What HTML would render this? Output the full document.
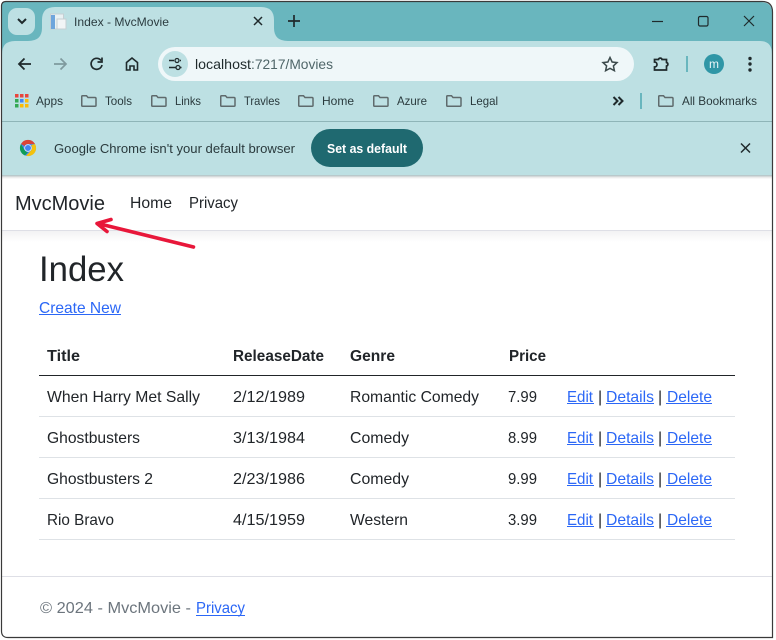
<!DOCTYPE html>
<html><head><meta charset="utf-8"><title>Index - MvcMovie</title>
<style>
html,body{margin:0;padding:0;background:#fff;width:776px;height:640px;overflow:hidden}
svg{display:block}
text{font-family:"Liberation Sans",sans-serif;font-size:16px;fill:#212529}
.l{fill:#2b67f6}
.b{font-size:12px;fill:#2a3a3d}
.t{font-size:16px;fill:#212529}
.h{font-weight:bold}
.ic{fill:none;stroke:#1f2a2c;stroke-width:1.6}
.fd{fill:none;stroke:#5f6a6c;stroke-width:1.5}
</style></head><body>
<svg width="776" height="640" viewBox="0 0 776 640" xmlns="http://www.w3.org/2000/svg">
<rect width="776" height="640" fill="#fff"/>
<!-- tab strip -->
<path d="M2 2H760Q772 2 772 12V60H2Z" fill="#69b6be"/>
<!-- toolbar + bookmarks + infobar -->
<path d="M2 54Q2 41 15 41H760Q772 41 772 54V176H2Z" fill="#bde0e3"/>
<!-- tab -->
<path d="M28 41Q42 41 42 28V20Q42 7 55 7H261Q274 7 274 20V28Q274 41 288 41Z" fill="#bde0e3"/>
<rect x="8" y="8" width="27" height="27" rx="9" fill="#bde0e3"/>
<path d="M18 19l4 4 4-4" fill="none" stroke="#1f2a2c" stroke-width="2"/>
<rect x="50.500" y="14" width="13" height="15" fill="#e9f1f3" stroke="#c5cfd3"/>
<rect x="51" y="15" width="4" height="14" fill="#6ea5dc"/>
<rect x="57" y="19" width="9" height="10" fill="#f2f5f6" stroke="#c5cfd3"/>
<text x="74" y="26" style="font-size:12px;fill:#2c3c40" textLength="95" lengthAdjust="spacingAndGlyphs">Index - MvcMovie</text>
<path d="M254 17l8 8M262 17l-8 8" fill="none" stroke="#1f2a2c" stroke-width="1.500"/>
<path d="M294 15v12M288 21h12" fill="none" stroke="#1f2a2c" stroke-width="1.700"/>
<!-- window controls -->
<path d="M652 21.500h11" stroke="#1f2a2c" stroke-width="1.200" fill="none"/>
<rect x="698.500" y="16.500" width="9.500" height="9.500" rx="1.500" fill="none" stroke="#1f2a2c" stroke-width="1.200"/>
<path d="M744 16l10 10M754 16l-10 10" stroke="#1f2a2c" stroke-width="1.200" fill="none"/>
<!-- nav -->
<path d="M31 64H19M24.500 58.500L19 64l5.500 5.500" class="ic" style="stroke-width:1.800"/>
<path d="M54 64H66M60.500 58.500L66 64l-5.500 5.500" fill="none" stroke="#7f9a9e" stroke-width="1.700"/>
<path d="M101 60.500A5.500 5.500 0 1 0 102 65M102 57.500v4.500h-4.500" class="ic" style="stroke-width:1.700"/>
<path d="M126.500 62.500L132 58l5.500 4.500V70H134v-4h-4v4h-3.500Z" class="ic"/>
<!-- address -->
<rect x="158" y="47" width="476" height="34" rx="17" fill="#eff7f9"/>
<circle cx="175" cy="64" r="13" fill="#bde0e3"/>
<path d="M169 60.500h5M180 60.500h1M169 67.500h7M180.500 67.500h1" stroke="#1f2a2c" stroke-width="1.400" fill="none"/>
<circle cx="177" cy="60.500" r="2" fill="none" stroke="#1f2a2c" stroke-width="1.300"/>
<circle cx="178" cy="67.500" r="2" fill="none" stroke="#1f2a2c" stroke-width="1.300"/>
<text x="195" y="69" style="font-size:14px;fill:#1f2a2c" textLength="56" lengthAdjust="spacingAndGlyphs">localhost</text>
<text x="251" y="69" style="font-size:14px;fill:#4f6669" textLength="82" lengthAdjust="spacingAndGlyphs">:7217/Movies</text>
<path d="M610 57.500l2.100 4.500 4.900.6-3.600 3.300 1 4.800-4.400-2.400-4.400 2.400 1-4.800-3.600-3.300 4.900-.6Z" fill="none" stroke="#3c4a4c" stroke-width="1.500"/>
<path d="M654.500 59.500H658.500A1.800 1.800 0 0 1 662 59.500H666.500V62.500A1.800 1.800 0 0 1 666.500 66V70H654.500V67A2.500 2.500 0 0 0 654.500 62Z" class="ic" style="stroke-width:1.700"/>
<rect x="686" y="56" width="2" height="16" fill="#69b6be"/>
<circle cx="714" cy="64" r="10" fill="#2f96a6"/>
<text x="714" y="68" text-anchor="middle" style="font-size:12px;fill:#e8f6f8">m</text>
<circle cx="750" cy="58.500" r="1.700" fill="#1f2a2c"/><circle cx="750" cy="64" r="1.700" fill="#1f2a2c"/><circle cx="750" cy="70" r="1.700" fill="#1f2a2c"/>
<!-- bookmarks -->
<g>
<rect x="15" y="94" width="3.500" height="3.500" fill="#e8453c"/><rect x="20" y="94" width="3.500" height="3.500" fill="#e8453c"/><rect x="25" y="94" width="3.500" height="3.500" fill="#e8453c"/>
<rect x="15" y="99" width="3.500" height="3.500" fill="#34a853"/><rect x="20" y="99" width="3.500" height="3.500" fill="#4285f4"/><rect x="25" y="99" width="3.500" height="3.500" fill="#fbbc05"/>
<rect x="15" y="104" width="3.500" height="3.500" fill="#34a853"/><rect x="20" y="104" width="3.500" height="3.500" fill="#fbbc05"/><rect x="25" y="104" width="3.500" height="3.500" fill="#fbbc05"/>
</g>
<defs><path id="f" d="M0.750 1.500Q0.750 0.750 1.500 0.750H5.500L7 2.500H14Q15 2.500 15 3.500V10.500Q15 11.250 14 11.250H1.500Q0.750 11.250 0.750 10.500Z" class="fd"/></defs>
<text x="36" y="105" class="b" textLength="27" lengthAdjust="spacingAndGlyphs">Apps</text>
<use href="#f" x="81" y="95"/><text x="105" y="105" class="b" textLength="27" lengthAdjust="spacingAndGlyphs">Tools</text>
<use href="#f" x="151" y="95"/><text x="175" y="105" class="b" textLength="26" lengthAdjust="spacingAndGlyphs">Links</text>
<use href="#f" x="220" y="95"/><text x="244" y="105" class="b" textLength="36" lengthAdjust="spacingAndGlyphs">Travles</text>
<use href="#f" x="298" y="95"/><text x="322" y="105" class="b" textLength="32" lengthAdjust="spacingAndGlyphs">Home</text>
<use href="#f" x="373" y="95"/><text x="397" y="105" class="b" textLength="30" lengthAdjust="spacingAndGlyphs">Azure</text>
<use href="#f" x="446" y="95"/><text x="470" y="105" class="b" textLength="28" lengthAdjust="spacingAndGlyphs">Legal</text>
<path d="M613.500 97l4 4-4 4M618.500 97l4 4-4 4" fill="none" stroke="#1f2a2c" stroke-width="2"/>
<rect x="640" y="93" width="2" height="16" fill="#69b6be"/>
<use href="#f" x="658" y="95"/><text x="682" y="105" class="b" textLength="75" lengthAdjust="spacingAndGlyphs">All Bookmarks</text>
<!-- infobar -->
<rect x="2" y="121" width="770" height="1" fill="#8fb5b8"/>
<circle cx="28" cy="148" r="8" fill="#4285f4"/>
<path d="M21 144A8 8 0 0 1 35 144H28A4 4 0 0 0 24.500 146Z" fill="#db4437"/>
<path d="M21 144L24.500 150A4 4 0 0 0 28 152L25 155.500A8 8 0 0 1 21 144Z" fill="#0f9d58"/>
<path d="M35 144A8 8 0 0 1 26 155.800L31.500 150A4 4 0 0 0 31 145Z" fill="#f4c20d"/>
<circle cx="28" cy="148" r="3.400" fill="#4285f4" stroke="#e8f0f2" stroke-width="0.800"/>
<text x="54" y="153" style="font-size:13px;fill:#2a3a3d" textLength="241" lengthAdjust="spacingAndGlyphs">Google Chrome isn't your default browser</text>
<rect x="311" y="129" width="112" height="38" rx="19" fill="#1f6970"/>
<text x="327" y="153" style="font-size:13px;fill:#fff;font-weight:bold" textLength="80" lengthAdjust="spacingAndGlyphs">Set as default</text>
<path d="M741 143.500l9 9M750 143.500l-9 9" fill="none" stroke="#1f2a2c" stroke-width="1.500"/>
<!-- infobar shadow -->
<rect x="2" y="175" width="770" height="1" fill="#b9c9cb"/>
<rect x="2" y="176" width="770" height="1" fill="#d4d9da"/>
<rect x="2" y="177" width="770" height="1" fill="#ececec"/>
<rect x="2" y="178" width="770" height="1" fill="#f8f8f8"/>
<!-- navbar -->
<text x="15" y="210" style="font-size:20px;fill:#212529" textLength="90" lengthAdjust="spacingAndGlyphs">MvcMovie</text>
<text x="130" y="208" class="t" textLength="42" lengthAdjust="spacingAndGlyphs">Home</text>
<text x="189" y="208" class="t" textLength="49" lengthAdjust="spacingAndGlyphs">Privacy</text>
<rect x="2" y="230" width="770" height="1" fill="#dedfe6"/>
<defs><linearGradient id="s" x1="0" y1="0" x2="0" y2="1"><stop offset="0" stop-color="#f2f2f3"/><stop offset="1" stop-color="#fff"/></linearGradient></defs>
<rect x="2" y="231" width="770" height="11" fill="url(#s)"/>
<!-- arrow -->
<path d="M193.500 247L98 223.500M111 219.500L97 223.500L107 231.500" fill="none" stroke="#e8173a" stroke-width="3.600" stroke-linecap="round" stroke-linejoin="round"/>
<!-- content -->
<text x="39" y="281" style="font-size:35px;fill:#212529" textLength="85" lengthAdjust="spacingAndGlyphs">Index</text>
<text x="39" y="313" class="l" textLength="82" lengthAdjust="spacingAndGlyphs">Create New</text>
<rect x="39" y="314" width="82" height="1" fill="#2b67f6"/>
<g>
<text x="47" y="361" class="t h" textLength="33" lengthAdjust="spacingAndGlyphs">Title</text>
<text x="233" y="361" class="t h" textLength="91" lengthAdjust="spacingAndGlyphs">ReleaseDate</text>
<text x="350" y="361" class="t h" textLength="45" lengthAdjust="spacingAndGlyphs">Genre</text>
<text x="509" y="361" class="t h" textLength="37" lengthAdjust="spacingAndGlyphs">Price</text>
</g>
<rect x="39" y="375" width="696" height="1" fill="#212529"/>
<rect x="39" y="416" width="696" height="1" fill="#dee2e6"/>
<rect x="39" y="457" width="696" height="1" fill="#dee2e6"/>
<rect x="39" y="498" width="696" height="1" fill="#dee2e6"/>
<rect x="39" y="539" width="696" height="1" fill="#dee2e6"/>
<!-- row 1 -->
<text x="47" y="402" class="t" textLength="153" lengthAdjust="spacingAndGlyphs">When Harry Met Sally</text>
<text x="233" y="402" class="t" textLength="72" lengthAdjust="spacingAndGlyphs">2/12/1989</text>
<text x="350" y="402" class="t" textLength="129" lengthAdjust="spacingAndGlyphs">Romantic Comedy</text>
<text x="508" y="402" class="t" textLength="29" lengthAdjust="spacingAndGlyphs">7.99</text>
<text x="567" y="402" class="l" textLength="26" lengthAdjust="spacingAndGlyphs">Edit</text><rect x="567" y="403" width="27" height="1" fill="#2b67f6"/>
<text x="598" y="402" class="t">|</text>
<text x="606" y="402" class="l" textLength="48" lengthAdjust="spacingAndGlyphs">Details</text><rect x="606" y="403" width="48" height="1" fill="#2b67f6"/>
<text x="658" y="402" class="t">|</text>
<text x="667" y="402" class="l" textLength="45" lengthAdjust="spacingAndGlyphs">Delete</text><rect x="666" y="403" width="46" height="1" fill="#2b67f6"/>
<!-- row 2 -->
<text x="47" y="443" class="t" textLength="93" lengthAdjust="spacingAndGlyphs">Ghostbusters</text>
<text x="233" y="443" class="t" textLength="72" lengthAdjust="spacingAndGlyphs">3/13/1984</text>
<text x="350" y="443" class="t" textLength="59" lengthAdjust="spacingAndGlyphs">Comedy</text>
<text x="508" y="443" class="t" textLength="29" lengthAdjust="spacingAndGlyphs">8.99</text>
<text x="567" y="443" class="l" textLength="26" lengthAdjust="spacingAndGlyphs">Edit</text><rect x="567" y="444" width="27" height="1" fill="#2b67f6"/>
<text x="598" y="443" class="t">|</text>
<text x="606" y="443" class="l" textLength="48" lengthAdjust="spacingAndGlyphs">Details</text><rect x="606" y="444" width="48" height="1" fill="#2b67f6"/>
<text x="658" y="443" class="t">|</text>
<text x="667" y="443" class="l" textLength="45" lengthAdjust="spacingAndGlyphs">Delete</text><rect x="666" y="444" width="46" height="1" fill="#2b67f6"/>
<!-- row 3 -->
<text x="47" y="484" class="t" textLength="106" lengthAdjust="spacingAndGlyphs">Ghostbusters 2</text>
<text x="233" y="484" class="t" textLength="72" lengthAdjust="spacingAndGlyphs">2/23/1986</text>
<text x="350" y="484" class="t" textLength="59" lengthAdjust="spacingAndGlyphs">Comedy</text>
<text x="508" y="484" class="t" textLength="29" lengthAdjust="spacingAndGlyphs">9.99</text>
<text x="567" y="484" class="l" textLength="26" lengthAdjust="spacingAndGlyphs">Edit</text><rect x="567" y="485" width="27" height="1" fill="#2b67f6"/>
<text x="598" y="484" class="t">|</text>
<text x="606" y="484" class="l" textLength="48" lengthAdjust="spacingAndGlyphs">Details</text><rect x="606" y="485" width="48" height="1" fill="#2b67f6"/>
<text x="658" y="484" class="t">|</text>
<text x="667" y="484" class="l" textLength="45" lengthAdjust="spacingAndGlyphs">Delete</text><rect x="666" y="485" width="46" height="1" fill="#2b67f6"/>
<!-- row 4 -->
<text x="47" y="525" class="t" textLength="67" lengthAdjust="spacingAndGlyphs">Rio Bravo</text>
<text x="233" y="525" class="t" textLength="72" lengthAdjust="spacingAndGlyphs">4/15/1959</text>
<text x="350" y="525" class="t" textLength="58" lengthAdjust="spacingAndGlyphs">Western</text>
<text x="508" y="525" class="t" textLength="29" lengthAdjust="spacingAndGlyphs">3.99</text>
<text x="567" y="525" class="l" textLength="26" lengthAdjust="spacingAndGlyphs">Edit</text><rect x="567" y="526" width="27" height="1" fill="#2b67f6"/>
<text x="598" y="525" class="t">|</text>
<text x="606" y="525" class="l" textLength="48" lengthAdjust="spacingAndGlyphs">Details</text><rect x="606" y="526" width="48" height="1" fill="#2b67f6"/>
<text x="658" y="525" class="t">|</text>
<text x="667" y="525" class="l" textLength="45" lengthAdjust="spacingAndGlyphs">Delete</text><rect x="666" y="526" width="46" height="1" fill="#2b67f6"/>
<!-- footer -->
<rect x="2" y="576" width="770" height="1" fill="#dedfe6"/>
<text x="40" y="613" style="font-size:16px;fill:#6c757d" textLength="151" lengthAdjust="spacingAndGlyphs">© 2024 - MvcMovie -</text>
<text x="196" y="613" class="l" textLength="49" lengthAdjust="spacingAndGlyphs">Privacy</text>
<rect x="196" y="615" width="49" height="1" fill="#2b67f6"/>
<!-- window frame -->
<path d="M1.500 6Q1.500 1.500 6 1.500H762Q772.500 1.500 772.500 12V637.500H8Q1.500 637.500 1.500 631Z" fill="none" stroke="#3a3a3a" stroke-width="1.200"/>
</svg>
</body></html>
